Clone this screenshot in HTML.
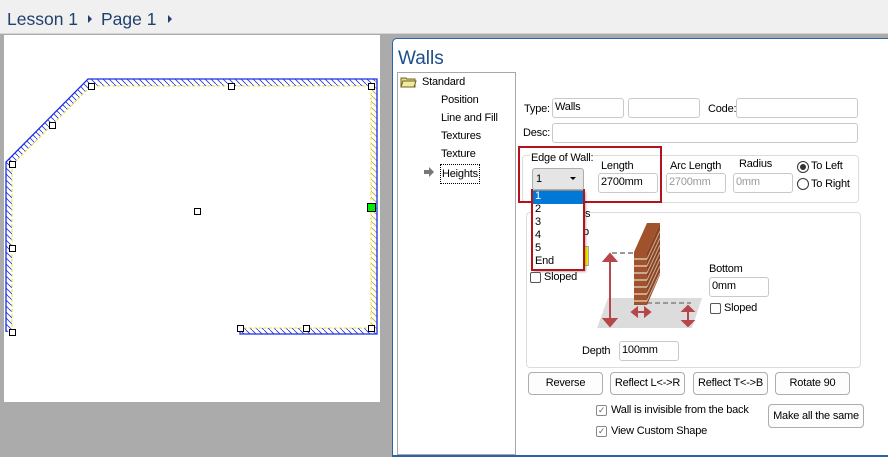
<!DOCTYPE html>
<html><head><meta charset="utf-8">
<style>
*{margin:0;padding:0;box-sizing:border-box}
body{width:888px;height:457px;overflow:hidden;background:#ababab;font-family:"Liberation Sans",sans-serif;font-size:11px;letter-spacing:-0.2px;color:#000;position:relative}
.a{position:absolute}
.t{position:absolute;white-space:nowrap;line-height:14px}
.in{position:absolute;background:#fff;border:1px solid #c9c9c9;border-radius:3px;padding:1px 2px;line-height:15px;white-space:nowrap}
.btn{position:absolute;background:#fdfdfd;border:1px solid #adadad;border-radius:4px;text-align:center;line-height:20px;white-space:nowrap}
.grp{position:absolute;border:1px solid #dcdcdc;border-radius:4px}
.cb{position:absolute;width:11px;height:11px;border:1px solid #555;background:#fff;border-radius:2px}
</style></head><body>
<div class="a" style="left:0;top:0;width:888px;height:34px;background:#f0f0f0;border-bottom:1px solid #d4d4d4"></div>
<div class="t" style="left:7px;top:8px;font-size:17.5px;letter-spacing:0;line-height:22px;color:#22406e">Lesson 1</div>
<div class="a" style="left:88px;top:15px;border-left:4px solid #22406e;border-top:4px solid transparent;border-bottom:4px solid transparent"></div>
<div class="t" style="left:101px;top:8px;font-size:17.5px;letter-spacing:0;line-height:22px;color:#22406e">Page 1</div>
<div class="a" style="left:168px;top:15px;border-left:4px solid #22406e;border-top:4px solid transparent;border-bottom:4px solid transparent"></div>

<div class="a" style="left:4px;top:35px;width:376px;height:367px;background:#fff"></div>
<svg class="a" style="left:0;top:0" width="390" height="457">
<defs><pattern id="h" width="6" height="6" patternUnits="userSpaceOnUse"><path d="M0 0L6 6" stroke="#2233dd" stroke-width="0.8"/></pattern>
<pattern id="hy" width="6" height="6" patternUnits="userSpaceOnUse"><path d="M0 0L6 6" stroke="#b8a840" stroke-width="0.8"/></pattern></defs>
<polygon points="88,79 377,79 371,86 91,86 12,165 6,162" fill="url(#h)"/>
<polygon points="6,162 12,165 12,332 6,332" fill="url(#h)"/>
<polygon points="371,86 377,79 377,334 371,328" fill="url(#hy)"/>
<polygon points="240,328 371,328 377,334 240,334" fill="url(#h)"/>
<path d="M6,332 L6,162 L88,79 L377,79 L377,334 L240,334 L240,328" fill="none" stroke="#1a2ee6" stroke-width="1.3"/>
<path d="M12,332 L12,165 L91,86 L371,86 L371,328 L240,328" fill="none" stroke="#e8e020" stroke-width="1" stroke-dasharray="3,2"/>
<g fill="#fff" stroke="#000" stroke-width="1">
<rect x="88.5" y="83.5" width="6" height="6"/><rect x="228.5" y="83.5" width="6" height="6"/><rect x="368.5" y="83.5" width="6" height="6"/>
<rect x="49.5" y="122.5" width="6" height="6"/><rect x="9.5" y="161.5" width="6" height="6"/><rect x="9.5" y="245.5" width="6" height="6"/><rect x="9.5" y="329.5" width="6" height="6"/>
<rect x="237.5" y="325.5" width="6" height="6"/><rect x="303.5" y="325.5" width="6" height="6"/><rect x="368.5" y="325.5" width="6" height="6"/>
<rect x="194.5" y="208.5" width="6" height="6"/>
<rect x="367.5" y="203.5" width="8" height="8" fill="#00ee00"/></g>
</svg>

<div class="a" style="left:392px;top:38px;width:500px;height:419px;background:#fff;border:1px solid #2a64a8;border-bottom:2px solid #2a64a8;border-radius:5px 0 0 0"></div>
<div class="t" style="left:398px;top:48px;font-size:19px;letter-spacing:0;line-height:22px;color:#1f4d8a">Walls</div>
<div class="a" style="left:397px;top:72px;width:119px;height:383px;border:1px solid #a8a8a8;background:#fff"></div>
<svg class="a" style="left:400px;top:75px" width="18" height="14"><path d="M1 3h5l1 1h8v8H1z" fill="#e6d88a" stroke="#6b6520"/><path d="M1 12l2-6h13l-2 6z" fill="#f3ea9c" stroke="#6b6520"/></svg>
<div class="t" style="left:422px;top:75px">Standard</div>
<div class="t" style="left:441px;top:93px">Position</div>
<div class="t" style="left:441px;top:111px">Line and Fill</div>
<div class="t" style="left:441px;top:129px">Textures</div>
<div class="t" style="left:441px;top:147px">Texture</div>
<svg class="a" style="left:423px;top:167px" width="12" height="10"><path d="M1 3h5V0l5 5-5 5V7H1z" fill="#777"/></svg>
<div class="t" style="left:440px;top:164px;border:1px dotted #000;padding:2px 1px;line-height:14px">Heights</div>

<div class="t" style="left:524px;top:102px">Type:</div>
<div class="in" style="left:552px;top:98px;width:72px;height:20px">Walls</div>
<div class="in" style="left:628px;top:98px;width:72px;height:20px"></div>
<div class="t" style="left:708px;top:102px">Code:</div>
<div class="in" style="left:736px;top:98px;width:122px;height:20px"></div>
<div class="t" style="left:523px;top:126px">Desc:</div>
<div class="in" style="left:552px;top:123px;width:306px;height:20px"></div>

<div class="grp" style="left:522px;top:155px;width:337px;height:48px"></div>
<div class="grp" style="left:526px;top:212px;width:335px;height:156px"></div>
<div class="a" style="left:518px;top:146px;width:144px;height:57px;border:2px solid #b5121b"></div>
<div class="t" style="left:530px;top:151px;background:#fff;padding:0 1px">Edge of Wall:</div>
<div class="a" style="left:532px;top:168px;width:52px;height:22px;background:#e5e5e5;border:1px solid #adadad;border-radius:3px"></div>
<div class="t" style="left:536px;top:172px">1</div>
<div class="a" style="left:570px;top:177px;border-top:3px solid #000;border-left:3px solid transparent;border-right:3px solid transparent"></div>
<div class="t" style="left:601px;top:159px">Length</div>
<div class="in" style="left:598px;top:173px;width:60px;height:20px">2700mm</div>
<div class="t" style="left:670px;top:159px">Arc Length</div>
<div class="in" style="left:666px;top:173px;width:60px;height:20px;color:#9a9a9a">2700mm</div>
<div class="t" style="left:739px;top:157px">Radius</div>
<div class="in" style="left:733px;top:173px;width:60px;height:20px;color:#9a9a9a">0mm</div>
<div class="a" style="left:797px;top:161px;width:12px;height:12px;border:1px solid #333;border-radius:50%;background:#fff"><div class="a" style="left:2px;top:2px;width:6px;height:6px;border-radius:50%;background:#333"></div></div>
<div class="t" style="left:811px;top:159px">To Left</div>
<div class="a" style="left:797px;top:178px;width:12px;height:12px;border:1px solid #333;border-radius:50%;background:#fff"></div>
<div class="t" style="left:811px;top:177px">To Right</div>

<div class="t" style="left:585px;top:207px;background:#fff">s</div>
<div class="t" style="left:583px;top:225px">p</div>
<div class="a" style="left:584px;top:246px;width:5px;height:20px;background:#f2f200;border:1px solid #aaa"></div>
<div class="a" style="left:532px;top:190px;width:52px;height:80px;background:#fff;border:1px solid #888;box-shadow:2px 2px 2px rgba(0,0,0,.3)"></div>
<div class="a" style="left:533px;top:191px;width:50px;height:13px;background:#0078d7"></div>
<div class="t" style="left:535px;top:190px;line-height:13px;color:#fff">1</div>
<div class="t" style="left:535px;top:203px;line-height:13px">2<br>3<br>4<br>5<br>End</div>
<div class="a" style="left:531px;top:189px;width:54px;height:82px;border:2px solid #b5121b;border-top:none"></div>
<div class="cb" style="left:530px;top:272px"></div>
<div class="t" style="left:544px;top:270px">Sloped</div>

<svg class="a" style="left:590px;top:215px" width="120" height="120">
<polygon points="18,83 112,83 102,113 7,113" fill="#dcdcdc"/>
<path d="M22,38h22M57,88h44" stroke="#999" stroke-width="2" stroke-dasharray="5,3"/>
<polygon points="44,37 57,8 70,8 57,37" fill="#a0522d"/>
<polygon points="57,37 70,8 70,60 57,90" fill="#8a4422"/>
<rect x="44" y="37" width="13" height="53" fill="#a0522d"/>
<path d="M44,44h13M44,51h13M44,58h13M44,65h13M44,72h13M44,79h13M44,86h13" stroke="#e8d8c8" stroke-width="1.3"/>
<path d="M57,44l13-28M57,51l13-28M57,58l13-28M57,65l13-28M57,72l13-28M57,79l13-28M57,86l13-28" stroke="#e8d8c8" stroke-width="1" opacity=".7"/>
<g stroke="#b5474b" stroke-width="2" fill="#b5474b">
<path d="M20,42V108"/><path d="M14,46l6-7 6,7zM14,104l6,7 6-7z"/>
<path d="M98,93V109"/><path d="M93,96l5-5 5,5zM93,106l5,5 5-5z"/>
<path d="M44,97H58"/><path d="M47,93l-5,4 5,4zM55,93l5,4-5,4z"/>
</g></svg>

<div class="t" style="left:709px;top:262px">Bottom</div>
<div class="in" style="left:709px;top:277px;width:60px;height:20px">0mm</div>
<div class="cb" style="left:710px;top:303px"></div>
<div class="t" style="left:724px;top:301px">Sloped</div>
<div class="t" style="left:582px;top:344px">Depth</div>
<div class="in" style="left:619px;top:341px;width:60px;height:20px">100mm</div>

<div class="btn" style="left:528px;top:372px;width:75px;height:23px">Reverse</div>
<div class="btn" style="left:610px;top:372px;width:75px;height:23px">Reflect L&lt;-&gt;R</div>
<div class="btn" style="left:693px;top:372px;width:75px;height:23px">Reflect T&lt;-&gt;B</div>
<div class="btn" style="left:775px;top:372px;width:75px;height:23px">Rotate 90</div>
<div class="cb" style="left:596px;top:405px;border-color:#888;font-size:9px;line-height:9px;text-align:center;color:#666">✓</div>
<div class="t" style="left:611px;top:403px">Wall is invisible from the back</div>
<div class="cb" style="left:596px;top:426px;border-color:#888;font-size:9px;line-height:9px;text-align:center;color:#666">✓</div>
<div class="t" style="left:611px;top:424px">View Custom Shape</div>
<div class="btn" style="left:768px;top:404px;width:96px;height:24px;line-height:22px">Make all the same</div>
</body></html>
